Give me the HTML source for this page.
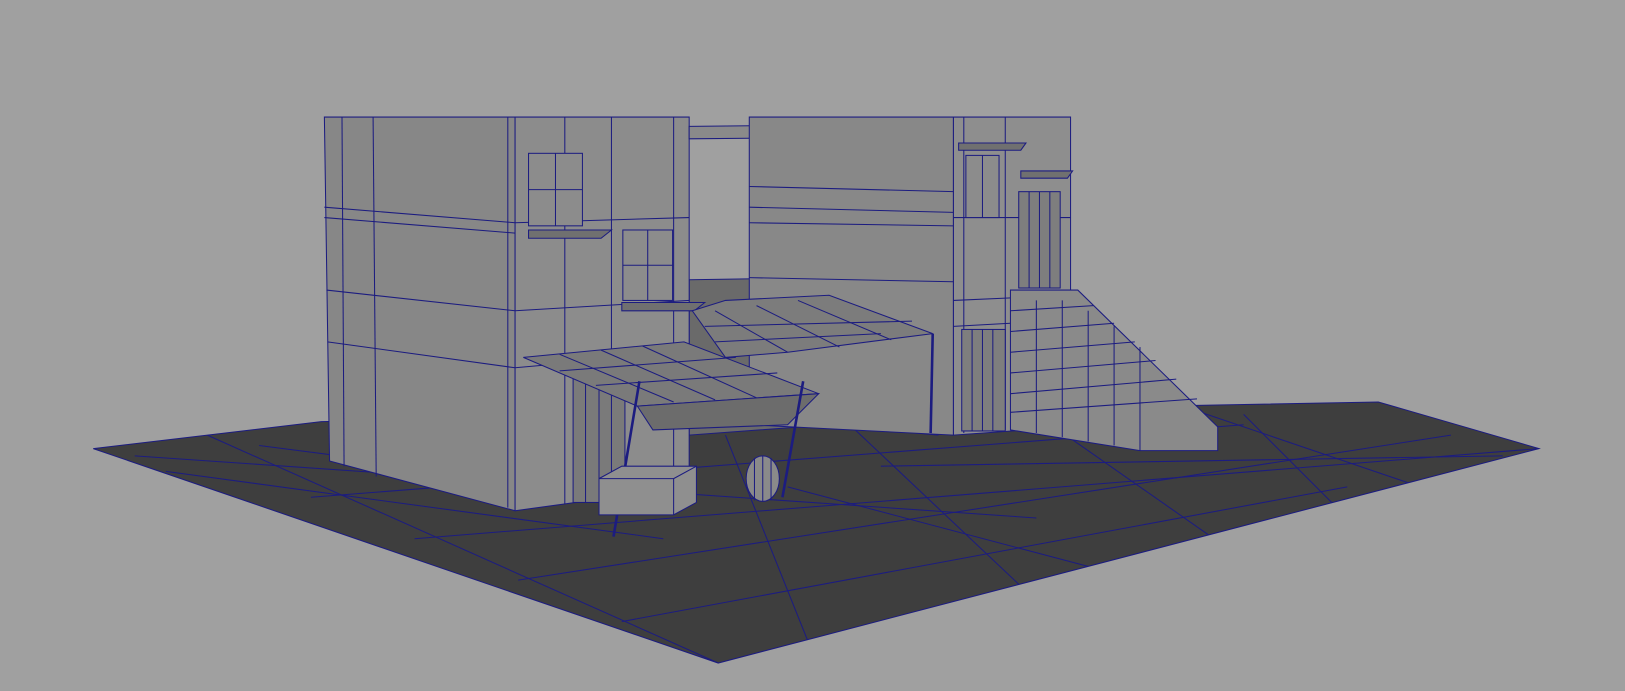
<!DOCTYPE html>
<html><head><meta charset="utf-8"><style>
html,body{margin:0;padding:0;background:#a0a0a0;overflow:hidden}
svg{display:block}
</style></head><body>
<svg width="1625" height="691" viewBox="0 0 1568 667" preserveAspectRatio="none" xmlns="http://www.w3.org/2000/svg">
<defs><clipPath id="g"><polygon points="90,433 310,407 1330,388 1485,433 693,640"/></clipPath></defs>
<rect width="1568" height="667" fill="#a0a0a0"/>
<g stroke="#1c1c80" stroke-width="1" fill="none">
<polygon points="90,433 310,407 1330,388 1485,433 693,640" fill="#3e3e3e"/>
<g clip-path="url(#g)">
<line x1="200" y1="420" x2="693" y2="640"/><line x1="130" y1="440" x2="1000" y2="500"/>
<line x1="300" y1="480" x2="1200" y2="410"/><line x1="400" y1="520" x2="1485" y2="433"/>
<line x1="500" y1="560" x2="1400" y2="420"/><line x1="600" y1="600" x2="1300" y2="470"/>
<line x1="820" y1="410" x2="1000" y2="580"/><line x1="1000" y1="400" x2="1200" y2="540"/>
<line x1="1150" y1="395" x2="1400" y2="480"/><line x1="700" y1="420" x2="780" y2="620"/>
<line x1="160" y1="455" x2="640" y2="520"/>
<line x1="760" y1="470" x2="1100" y2="560"/><line x1="850" y1="450" x2="1450" y2="440"/>
<line x1="250" y1="430" x2="560" y2="470"/><line x1="1200" y1="400" x2="1300" y2="500"/>
</g>
<polygon points="665,270 800,268 800,410 665,420" fill="#6a6a6a"/>
<polygon points="800,268 905,320 905,420 800,410" fill="#7a7a7a"/>
<polygon points="313,113 497,113 497,493 318,445" fill="#878787"/>
<polygon points="497,113 665,113 665,470 497,493" fill="#8c8c8c"/>
<line x1="313" y1="200" x2="497" y2="215"/><line x1="313" y1="210" x2="497" y2="225"/>
<line x1="315" y1="280" x2="497" y2="300"/><line x1="316" y1="330" x2="497" y2="355"/>
<line x1="330" y1="113" x2="332" y2="450"/><line x1="360" y1="113" x2="363" y2="460"/>
<line x1="490" y1="113" x2="490" y2="490"/>
<line x1="497" y1="215" x2="665" y2="210"/><line x1="497" y1="300" x2="665" y2="290"/>
<line x1="497" y1="355" x2="665" y2="340"/><line x1="545" y1="113" x2="545" y2="486"/>
<line x1="590" y1="113" x2="590" y2="480"/><line x1="650" y1="113" x2="650" y2="472"/>
<rect x="510" y="148" width="52" height="70" fill="#8c8c8c"/><line x1="536" y1="148" x2="536" y2="218"/><line x1="510" y1="183" x2="562" y2="183"/>
<polygon points="510,222 590,222 580,230 510,230" fill="#707070"/>
<rect x="601" y="222" width="48" height="68" fill="#8c8c8c"/><line x1="625" y1="222" x2="625" y2="290"/><line x1="601" y1="256" x2="649" y2="256"/>
<polygon points="600,292 680,292 670,300 600,300" fill="#707070"/>
<rect x="553" y="365" width="50" height="120" fill="#7a7a7a"/>
<line x1="565" y1="365" x2="565" y2="485"/><line x1="578" y1="365" x2="578" y2="485"/><line x1="590" y1="365" x2="590" y2="485"/>
<polygon points="665,122 865,120 865,132 665,134" fill="#8a8a8a"/>
<polygon points="723,113 920,113 920,420 723,410" fill="#888"/>
<polygon points="920,113 1033,113 1033,412 920,420" fill="#8e8e8e"/>
<line x1="723" y1="180" x2="920" y2="185"/><line x1="723" y1="200" x2="920" y2="205"/>
<line x1="723" y1="215" x2="920" y2="218"/><line x1="723" y1="268" x2="920" y2="272"/>
<line x1="920" y1="210" x2="1033" y2="210"/><line x1="920" y1="290" x2="1033" y2="285"/>
<line x1="920" y1="315" x2="975" y2="312"/><line x1="930" y1="113" x2="930" y2="418"/>
<line x1="970" y1="113" x2="970" y2="415"/>
<rect x="932" y="150" width="32" height="60" fill="#8c8c8c"/><line x1="948" y1="150" x2="948" y2="210"/>
<rect x="983" y="185" width="40" height="93" fill="#7e7e7e"/>
<line x1="993" y1="185" x2="993" y2="278"/><line x1="1003" y1="185" x2="1003" y2="278"/><line x1="1013" y1="185" x2="1013" y2="278"/>
<rect x="928" y="318" width="42" height="98" fill="#7e7e7e"/>
<line x1="938" y1="318" x2="938" y2="416"/><line x1="948" y1="318" x2="948" y2="416"/><line x1="958" y1="318" x2="958" y2="416"/>
<polygon points="925,138 990,138 985,145 925,145" fill="#707070"/>
<polygon points="985,165 1035,165 1030,172 985,172" fill="#707070"/>
<polygon points="975,280 1040,280 1175,412 1175,435 1100,435 975,415" fill="#8a8a8a"/>
<line x1="975" y1="300" x2="1055" y2="295"/><line x1="975" y1="320" x2="1075" y2="312"/>
<line x1="975" y1="340" x2="1095" y2="330"/><line x1="975" y1="360" x2="1115" y2="348"/>
<line x1="975" y1="380" x2="1135" y2="366"/><line x1="975" y1="398" x2="1155" y2="385"/>
<line x1="1000" y1="290" x2="1000" y2="418"/><line x1="1025" y1="290" x2="1025" y2="422"/>
<line x1="1050" y1="300" x2="1050" y2="426"/><line x1="1075" y1="315" x2="1075" y2="430"/>
<line x1="1100" y1="335" x2="1100" y2="435"/>
<polygon points="668,300 700,290 800,285 900,322 760,340 700,345" fill="#7c7c7c"/>
<line x1="690" y1="300" x2="760" y2="340"/><line x1="730" y1="295" x2="810" y2="335"/><line x1="770" y1="290" x2="860" y2="328"/>
<line x1="680" y1="315" x2="880" y2="310"/><line x1="690" y1="330" x2="850" y2="322"/>
<polygon points="505,345 660,330 790,380 615,392" fill="#7a7a7a"/>
<line x1="540" y1="342" x2="650" y2="388"/><line x1="580" y1="338" x2="690" y2="386"/><line x1="620" y1="334" x2="730" y2="384"/>
<line x1="540" y1="358" x2="710" y2="345"/><line x1="575" y1="372" x2="750" y2="360"/>
<polygon points="615,392 790,380 760,410 630,415" fill="#6c6c6c"/>
<line x1="617" y1="368" x2="592" y2="518" stroke-width="2.5"/>
<line x1="775" y1="368" x2="755" y2="480" stroke-width="2.5"/>
<line x1="900" y1="322" x2="898" y2="418" stroke-width="2.5"/>
<polygon points="578,462 600,450 672,450 672,485 650,497 578,497" fill="#8f8f8f"/>
<line x1="578" y1="462" x2="650" y2="462"/><line x1="650" y1="462" x2="672" y2="450"/><line x1="650" y1="462" x2="650" y2="497"/>
<ellipse cx="736" cy="462" rx="16" ry="22" fill="#8a8a8a"/>
<line x1="728" y1="442" x2="728" y2="483"/><line x1="736" y1="440" x2="736" y2="484"/><line x1="744" y1="442" x2="744" y2="483"/>
</g>
</svg>
</body></html>
